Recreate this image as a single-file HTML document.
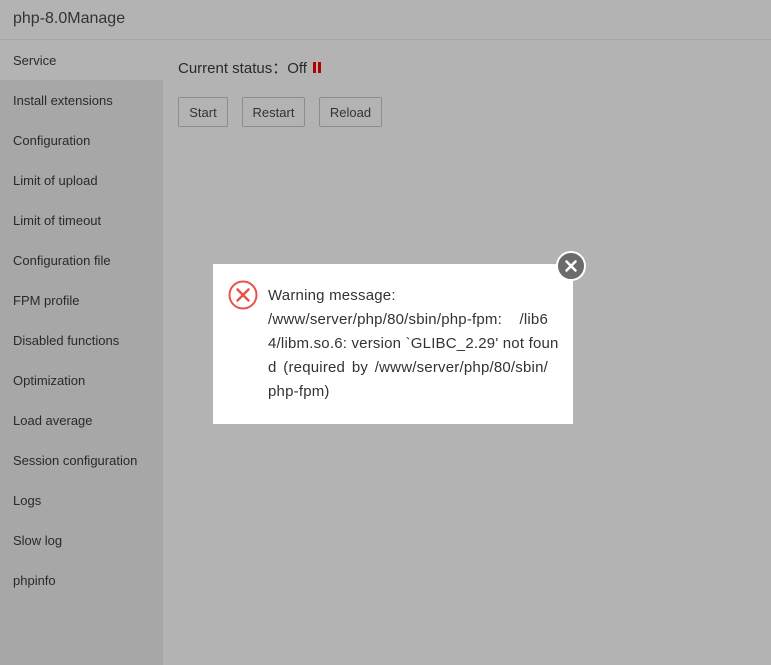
<!DOCTYPE html><html><head><style>
body{margin:0;width:771px;height:665px;overflow:hidden;background:#b3b3b3;font-family:"Liberation Sans",sans-serif;color:#333;position:relative}
.hd{height:39px;border-bottom:1px solid #a5a5a5;font-size:16px;line-height:38px;padding-left:13px;color:#333}
.sb{position:absolute;left:0;top:40px;width:163px;height:625px;background:#a7a7a7}
.sb div{height:40px;line-height:42px;padding-left:13px;font-size:13px;color:#2a2a2a}
.sb div.a{background:#b3b3b3}
.st{position:absolute;left:178px;top:57px;font-size:15px;color:#2a2a2a}
.bar{display:inline-block;width:3px;height:11px;background:#b00000;margin-left:2px}
.btn{position:absolute;top:97px;height:28px;border:1px solid #8c8c8c;border-radius:2px;font-size:13px;line-height:30px;text-align:center;color:#333}
.dlg{position:absolute;left:213px;top:264px;width:360px;height:160px;background:#fff}
.msg{position:absolute;left:55px;top:20px;font-size:15px;line-height:24px;color:#333;white-space:nowrap;letter-spacing:0.2px}
.msg .j{width:280px;text-align:justify;text-align-last:justify}
.cl{position:absolute;left:556px;top:251px;width:26px;height:26px;border-radius:50%;background:#6b6b6b;border:2px solid #fff}
</style></head><body>
<div class="hd">php-8.0Manage</div>
<div class="sb"><div class="a">Service</div><div>Install extensions</div><div>Configuration</div><div>Limit of upload</div><div>Limit of timeout</div><div>Configuration file</div><div>FPM profile</div><div>Disabled functions</div><div>Optimization</div><div>Load average</div><div>Session configuration</div><div>Logs</div><div>Slow log</div><div>phpinfo</div></div>
<div class="st">Current status：Off <span class="bar"></span><span class="bar"></span></div>
<div class="btn" style="left:178px;width:48px">Start</div>
<div class="btn" style="left:242px;width:61px">Restart</div>
<div class="btn" style="left:319px;width:61px">Reload</div>
<div class="dlg">
<svg style="position:absolute;left:15px;top:16px" width="30" height="30" viewBox="0 0 30 30"><circle cx="15" cy="15" r="13.5" fill="none" stroke="#e8534a" stroke-width="2"/><path d="M9.5 9.5L20.5 20.5M20.5 9.5L9.5 20.5" stroke="#e8534a" stroke-width="2.5" stroke-linecap="round"/></svg>
<div class="msg"><div>Warning message:</div><div class="j">/www/server/php/80/sbin/php-fpm: /lib6</div><div class="j">4/libm.so.6: version `GLIBC_2.29' not foun</div><div class="j">d (required by /www/server/php/80/sbin/</div><div>php-fpm)</div></div>
</div>
<div class="cl"><svg width="26" height="26" viewBox="0 0 26 26"><path d="M8.5 8.5L17.5 17.5M17.5 8.5L8.5 17.5" stroke="#fff" stroke-width="2.5" stroke-linecap="round"/></svg></div>
</body></html>
